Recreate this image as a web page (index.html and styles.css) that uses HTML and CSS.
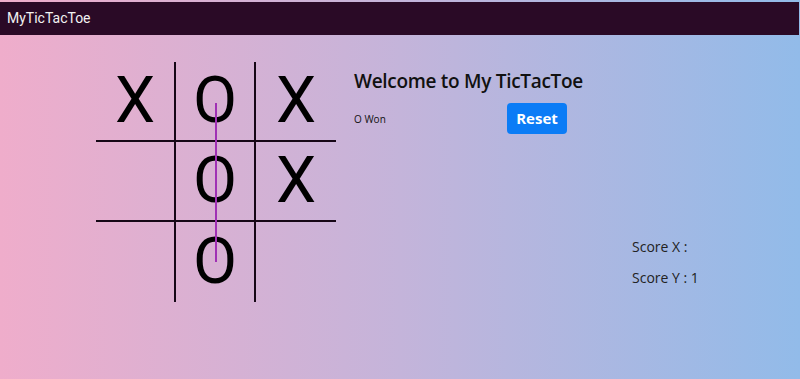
FILE: index.html
```html
<!doctype html>
<html lang="en">
<head>
	<meta charset="UTF-8">
	<title>MyTicTacToe</title>
	<link rel="stylesheet" href="styles.css">
</head>
<body>
	<nav class="navbar">MyTicTacToe</nav>
	<div class="main">
		<div class="board">
			<div class="cell">X</div>
			<div class="cell">O</div>
			<div class="cell">X</div>
			<div class="cell"></div>
			<div class="cell">O</div>
			<div class="cell">X</div>
			<div class="cell"></div>
			<div class="cell">O</div>
			<div class="cell"></div>
			<span class="win-line"></span>
		</div>
		<div class="side">
			<h1 class="title">Welcome to My TicTacToe</h1>
			<div class="status">
				<span class="msg">O Won</span>
				<a href="javascript:;" class="btn-reset">Reset</a>
			</div>
			<div class="score">
				<p>Score X :</p>
				<p>Score Y : 1</p>
			</div>
		</div>
	</div>
</body>
</html>
```

FILE: styles.css
```css
body,div,h1,p{
	margin:0;
	padding:0;
}
html,body{
	height:100%;
}
body{
	background:linear-gradient(to right,#efadcb 0%,#c4b4da 50%,#92bbe9 100%);
	font-family:"Open Sans",sans-serif;
	color:#111;
	padding-top:2px;
	box-sizing:border-box;
}
.navbar{
	display:block;
	height:33px;
	background:#2a0a26;
	color:#f2f2f2;
	font:400 14px/33px Roboto,sans-serif;
	padding-left:7px;
	margin-right:1px;
}
.main{
	display:flex;
	padding:27px 0 0 96px;
}
.board{
	position:relative;
	display:grid;
	grid-template-columns:repeat(3,80px);
	grid-template-rows:repeat(3,80px);
}
.cell{
	box-sizing:border-box;
	display:flex;
	align-items:center;
	justify-content:center;
	font:400 64px/1 Roboto,sans-serif;
	color:#000;
}
.cell:nth-child(3n+1),
.cell:nth-child(3n+2){
	border-right:2px solid #160716;
}
.cell:nth-child(-n+6){
	border-bottom:2px solid #160716;
}
.win-line{
	position:absolute;
	left:119px;
	top:41px;
	width:2px;
	height:159px;
	background:#a030b4;
}
.side{
	padding:5px 0 0 18px;
	flex:1;
}
.title{
	font-size:19px;
	font-weight:600;
	line-height:28px;
	letter-spacing:-0.3px;
	color:#111;
}
.status{
	display:flex;
	align-items:center;
	margin-top:8px;
}
.msg{
	font-size:10px;
	width:153px;
}
.btn-reset{
	display:block;
	width:60px;
	height:31px;
	line-height:31px;
	text-align:center;
	background:#0b7cf6;
	color:#fff;
	border-radius:4px;
	font-weight:700;
	font-size:15px;
	text-decoration:none;
}
.score{
	margin:97px 0 0 278px;
	font-size:14px;
	color:#222;
}
.score p{
	line-height:31px;
}
```
